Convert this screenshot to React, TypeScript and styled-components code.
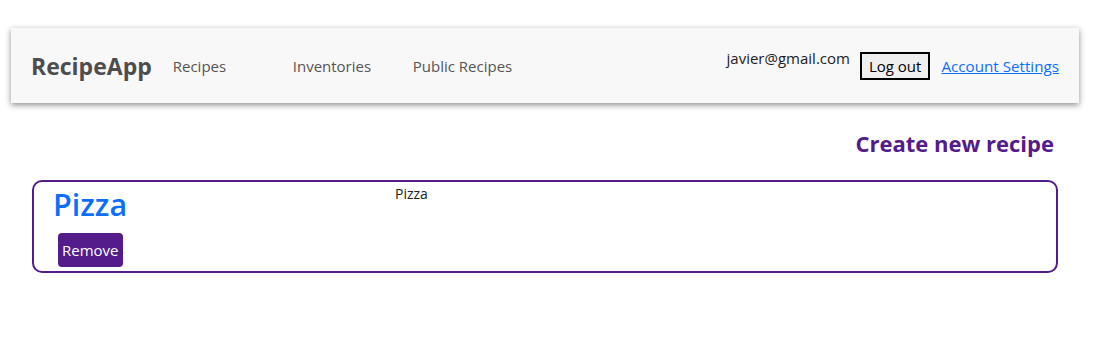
import React from 'react';
import styled, { createGlobalStyle } from 'styled-components';

const GlobalStyle = createGlobalStyle`
  html, body {
    margin: 0;
    padding: 0;
    background: #ffffff;
    font-family: 'Open Sans', 'Noto Sans', Arial, sans-serif;
  }
`;

const Page = styled.div`
  padding: 28px 16px 0 11px;
  width: 1095px;
  box-sizing: border-box;
`;

const Navbar = styled.nav`
  display: flex;
  align-items: center;
  height: 75px;
  padding: 0 20px 0 20px;
  background: #f8f8f8;
  box-shadow: 0 2px 6px rgba(0, 0, 0, 0.45);
`;

const Brand = styled.span`
  font-size: 23px;
  font-weight: 700;
  color: #4d4d4d;
  margin-right: 21px;
`;

const NavLink = styled.a`
  width: 120px;
  font-size: 15px;
  color: #555;
  text-decoration: none;
`;

const Spacer = styled.div`
  flex: 1;
`;

const UserEmail = styled.span`
  align-self: flex-start;
  margin-top: 20px;
  font-size: 15px;
  color: #222;
  margin-right: 10px;
`;

const LogoutButton = styled.button`
  font-family: inherit;
  font-size: 15px;
  color: #000;
  background: #efefef;
  border: 2px solid #000;
  padding: 2px 7px;
  margin-right: 11px;
`;

const SettingsLink = styled.a`
  font-size: 15.2px;
  color: #0d6efd;
  text-decoration: underline;
`;

const Main = styled.main`
  padding: 25px 21px 0 21px;
`;

const HeaderRow = styled.div`
  display: flex;
  justify-content: flex-end;
  padding-right: 4px;
`;

const CreateLink = styled.a`
  font-size: 22px;
  font-weight: 700;
  color: #541b8b;
  text-decoration: none;
`;

const RecipeCard = styled.div`
  display: flex;
  margin-top: 22px;
  height: 93px;
  box-sizing: border-box;
  border: 2px solid #541b8b;
  border-radius: 10px;
`;

const CardLeft = styled.div`
  width: 342px;
  padding-left: 19px;
`;

const RecipeTitle = styled.h2`
  margin: 2px 0 0 0;
  font-size: 30.5px;
  font-weight: 600;
  color: #0d6efd;
  line-height: 40px;
`;

const RemoveButton = styled.button`
  margin: 9px 0 0 5px;
  font-family: inherit;
  font-size: 15px;
  color: #fff;
  background: #541b8b;
  border: none;
  border-radius: 4px;
  height: 34px;
  padding: 0 4px;
`;

const Description = styled.p`
  margin: 2px 0 0 0;
  font-size: 14px;
  color: #222;
`;

export default function App() {
  return (
    <>
      <GlobalStyle />
      <Page>
        <Navbar>
          <Brand>RecipeApp</Brand>
          <NavLink href="#">Recipes</NavLink>
          <NavLink href="#">Inventories</NavLink>
          <NavLink href="#">Public Recipes</NavLink>
          <Spacer />
          <UserEmail>javier@gmail.com</UserEmail>
          <LogoutButton>Log out</LogoutButton>
          <SettingsLink href="#">Account Settings</SettingsLink>
        </Navbar>
        <Main>
          <HeaderRow>
            <CreateLink href="#">Create new recipe</CreateLink>
          </HeaderRow>
          <RecipeCard>
            <CardLeft>
              <RecipeTitle>Pizza</RecipeTitle>
              <RemoveButton>Remove</RemoveButton>
            </CardLeft>
            <Description>Pizza</Description>
          </RecipeCard>
        </Main>
      </Page>
    </>
  );
}
